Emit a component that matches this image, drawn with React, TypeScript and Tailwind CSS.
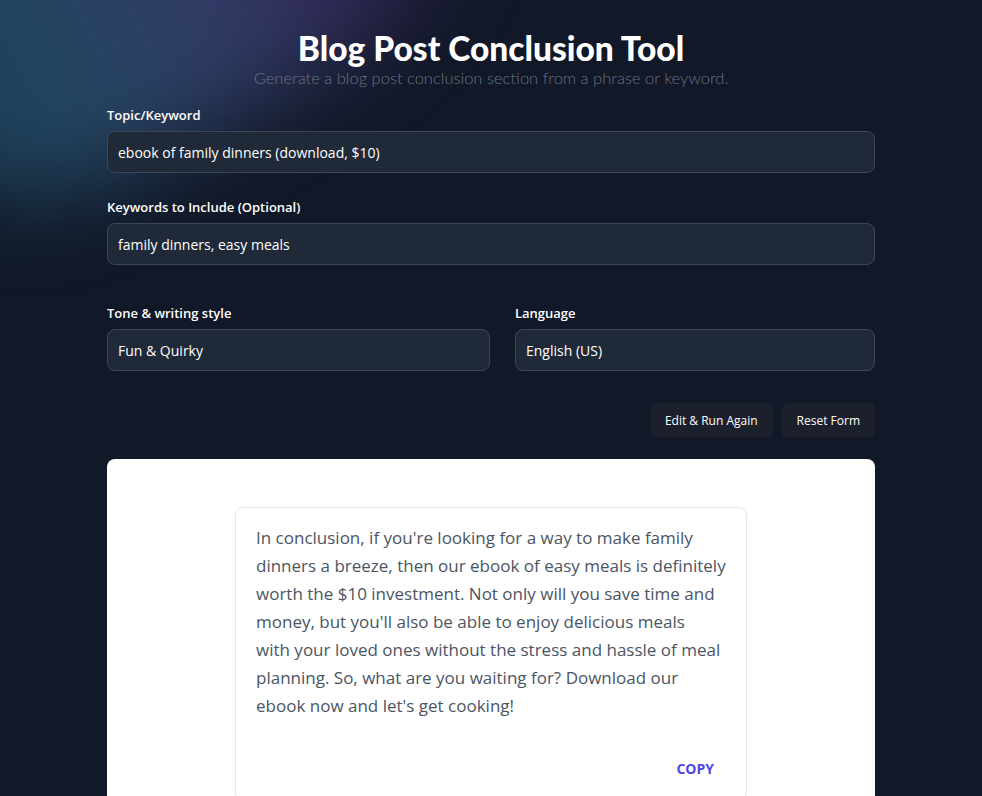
import React from "react";

const labelCls = "block text-[13px] leading-[20px] font-semibold text-white mb-[6px]";
const fieldCls =
  "w-full h-[42px] rounded-lg border border-[#3f4756] bg-[#1f2937] px-[10px] text-[14px] text-white outline-none";

const Field = ({ label, value }: { label: string; value: string }) => (
  <div>
    <label className={labelCls}>{label}</label>
    <input className={fieldCls} defaultValue={value} readOnly />
  </div>
);

export default function App() {
  return (
    <div
      className="relative min-h-[796px] overflow-hidden bg-[#111827] text-white"
      style={{ fontFamily: "'Open Sans', 'Noto Sans', sans-serif" }}
    >
      {/* soft teal/purple glow in the top-left corner */}
      <div className="pointer-events-none absolute -left-[180px] -top-[250px] h-[390px] w-[640px] -rotate-[28deg] rounded-full bg-[linear-gradient(90deg,#1c465c_0%,#28506f_30%,#3a4576_55%,#38295f_80%,#221b42_100%)] opacity-80 blur-[45px]" />

      <div className="relative mx-auto w-[768px] pt-[28px]">
        <header className="text-center">
          <h1
            className="text-[33.5px] font-black leading-[40px] text-white"
            style={{ fontFamily: "Lato, sans-serif" }}
          >
            Blog Post Conclusion Tool
          </h1>
          <p
            className="text-[16.5px] font-light leading-[20px] text-[#6b7280]"
            style={{ fontFamily: "Lato, sans-serif" }}
          >
            Generate a blog post conclusion section from a phrase or keyword.
          </p>
        </header>

        <form className="mt-[17px]">
          <div className="flex flex-col gap-[24px]">
            <Field label="Topic/Keyword" value="ebook of family dinners (download, $10)" />
            <Field label="Keywords to Include (Optional)" value="family dinners, easy meals" />
          </div>

          <div className="mt-[38px] grid grid-cols-[383px_1fr] gap-[25px]">
            <Field label="Tone & writing style" value="Fun & Quirky" />
            <Field label="Language" value="English (US)" />
          </div>

          <div className="mt-[32px] flex justify-end gap-[9px]">
            <button type="button" className="h-[35px] rounded-md bg-[#1b202c] px-[15px] text-[12px] text-white">
              Edit &amp; Run Again
            </button>
            <button type="button" className="h-[35px] rounded-md bg-[#1b202c] px-[15px] text-[12px] text-white">
              Reset Form
            </button>
          </div>
        </form>

        <section className="mt-[21px] rounded-lg bg-white pb-[40px] pt-[48px]">
          <div className="mx-auto w-[512px] rounded-lg border border-[#e5e7eb] px-[20px] pb-[20px] pt-[16px]">
            <p className="text-[17px] leading-[28px] text-[#4b5563]">
              In conclusion, if you're looking for a way to make family dinners a breeze, then our ebook of easy meals
              is definitely worth the $10 investment. Not only will you save time and money, but you'll also be able to
              enjoy delicious meals
              <br />
              with your loved ones without the stress and hassle of meal planning. So, what are you waiting for? Download
              our ebook now and let's get cooking!
            </p>
            <div className="mt-[38px] flex justify-end pr-[12px]">
              <button type="button" className="text-[14px] font-bold text-[#4f46e5]">
                COPY
              </button>
            </div>
          </div>
        </section>
      </div>
    </div>
  );
}
